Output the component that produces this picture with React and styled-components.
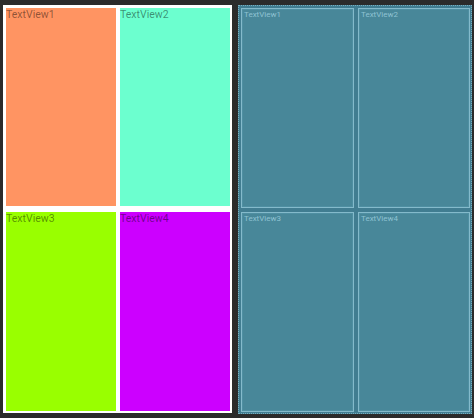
import styled, { createGlobalStyle } from 'styled-components';

const GlobalStyle = createGlobalStyle`
    html, body {
        margin: 0;
        padding: 0;
        background: #2b2b2b;
        font-family: Roboto, "Liberation Sans", sans-serif;
    }
`;

const Screen = styled.div`
    display: flex;
    column-gap: 6px;
    width: 474px;
    height: 418px;
    box-sizing: border-box;
    padding: 5px 2px 4px 3px;
`;

const Frame = styled.div`
    display: grid;
    grid-template-columns: 110px 110px;
    grid-template-rows: 198px 199px;
    column-gap: 4px;
    row-gap: 6px;
    width: 229px;
    height: 408px;
    box-sizing: border-box;
    padding: 3px 2px 2px 3px;
    background: #ffffff;
`;

const Cell = styled.div`
    background: ${({ $color }) => $color};
    color: rgba(0, 0, 0, 0.45);
    font-size: 10.5px;
    line-height: 12px;
    padding: 1px 0 0 0;
`;

const Blueprint = styled.div`
    display: grid;
    grid-template-columns: 113px 112px;
    grid-template-rows: 200px 200px;
    column-gap: 4px;
    row-gap: 4px;
    width: 234px;
    height: 409px;
    box-sizing: border-box;
    padding: 2px;
    background: #417d91;
    border: 1px dotted #79afc0;
`;

const BlueCell = styled.div`
    background: #488799;
    border: 1px solid #84bacb;
    box-shadow: inset 0 0 0 1px #4f8fa2;
    color: #8ec2d2;
    font-size: 8px;
    line-height: 9px;
    padding: 1px 0 0 2px;
`;

const COLORS = ['#ff9462', '#6cffcf', '#99ff00', '#cc00ff'];


function App() {
    const labels = ['TextView1', 'TextView2', 'TextView3', 'TextView4'];
    return (
        <>
            <GlobalStyle />
            <Screen>
                <Frame>
                    {labels.map((label, i) => (
                        <Cell key={label} $color={COLORS[i]}>{label}</Cell>
                    ))}
                </Frame>
                <Blueprint>
                    {labels.map((label) => (
                        <BlueCell key={label}>{label}</BlueCell>
                    ))}
                </Blueprint>
            </Screen>
        </>
    );
}


export default App;
